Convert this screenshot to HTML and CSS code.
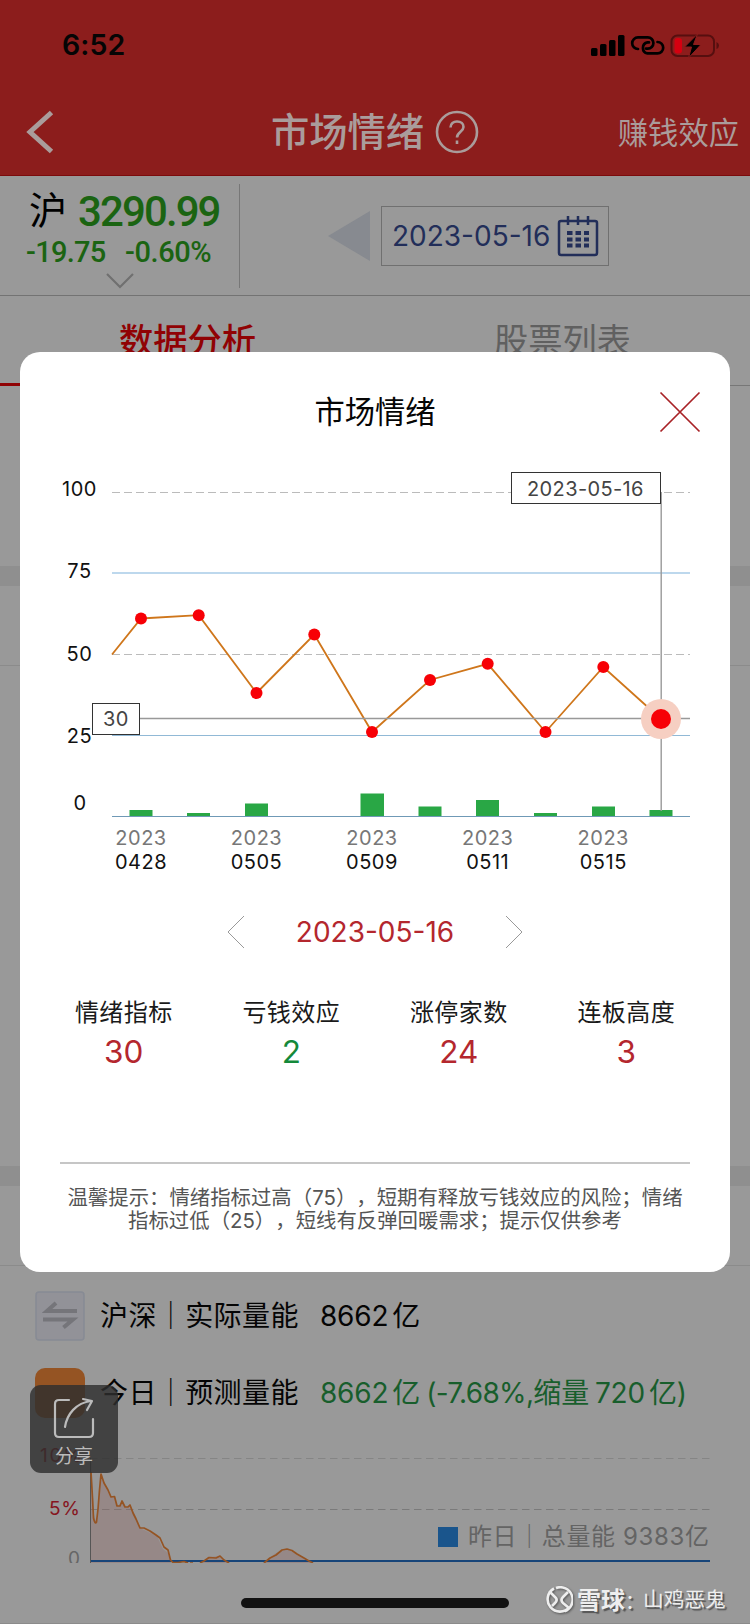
FILE: index.html
```html
<!DOCTYPE html>
<html lang="zh-CN">
<head>
<meta charset="utf-8">
<title>市场情绪</title>
<link rel="stylesheet" href="styles.css">
</head>
<body>
<div class="screen">
  <header class="header">
    <div class="status">
      <span class="time">6:52</span>
      <svg class="status-icons" width="132" height="26" viewBox="0 0 132 26">
        <rect x="1" y="15" width="6.500" height="8" rx="1.500"/>
        <rect x="10" y="11" width="6.500" height="12" rx="1.500"/>
        <rect x="19" y="7" width="6.500" height="16" rx="1.500"/>
        <rect x="28" y="2" width="6.500" height="21" rx="1.500"/>
        <path class="link" d="M48 16A5.800 5.800 0 0 1 48 4.400H57.800A5.600 5.600 0 0 1 57.800 15.600H56"/>
        <path class="link" d="M67.500 9A5.700 5.700 0 0 1 67.500 20.400H57.500A5.600 5.600 0 0 1 57.500 9.400H59"/>
        <rect class="battery" x="81.500" y="2.500" width="42.500" height="20.500" rx="6"/>
        <path class="cap" d="M126.500 9Q129 10 129 12.500Q129 15 126.500 16Z"/>
        <rect class="charge" x="84.500" y="5" width="7.500" height="15.500" rx="3"/>
        <path class="bolt" d="M107.500 1L94.500 14H101.500L98.500 25L111 11.500H103.500Z"/>
      </svg>
    </div>
    <div class="navbar">
      <svg class="back" width="30" height="44" viewBox="0 0 30 44"><path d="M26.500 2.500L5 22L26.500 41.500"/></svg>
      <div class="nav-title"><span>市场情绪</span>
        <svg width="44" height="44" viewBox="0 0 44 44"><circle cx="22" cy="22" r="20"/><path d="M15.500 17.500C15.500 13.500 18.500 11.500 22 11.500C26 11.500 28.500 13.800 28.500 17C28.500 21.500 22 22 22 27.500"/><path d="M22 30.500V34"/></svg>
      </div>
      <span class="nav-link">赚钱效应</span>
    </div>
  </header>

  <section class="quote">
    <div class="index">
      <div class="index-main"><span class="index-name">沪</span><span class="price">3290.99</span></div>
      <div class="index-sub"><span class="diff">-19.75</span><span class="pct">-0.60%</span></div>
      <svg class="down" width="30" height="18" viewBox="0 0 30 18"><path d="M2 2L15 15L28 2"/></svg>
    </div>
    <div class="picker">
      <svg width="42" height="50" viewBox="0 0 42 50"><path d="M0 25L42 0V50Z"/></svg>
      <div class="date-box"><span>2023-05-16</span>
        <svg width="42" height="42" viewBox="0 0 42 42">
          <rect x="2" y="6" width="38" height="34" rx="2"/>
          <path d="M11 1V10M21 1V10M31 1V10"/>
          <path class="cells" d="M10 18H32M10 24.500H32M10 30.500H32"/>
        </svg>
      </div>
    </div>
  </section>

  <nav class="tabs"><span class="tab active">数据分析</span><span class="tab">股票列表</span></nav>
  <div class="panel first"></div>
  <div class="band"></div>
  <div class="panel-head"></div>
  <div class="panel second"></div>
  <div class="band"></div>
  <div class="panel-head"></div>

  <section class="volume">
    <div class="vol-row">
      <svg class="swap" width="50" height="50" viewBox="0 0 50 50"><rect x="1" y="1" width="48" height="48" rx="3"/><path d="M42 20H12L21 12M8 28.500H38L28.500 36.500"/></svg>
      <span class="vol-label">沪深｜实际量能</span><span class="vol-value">8662<i>亿</i></span>
    </div>
    <div class="vol-row">
      <span class="today"></span>
      <span class="vol-label">今日｜预测量能</span><span class="vol-value green">8662<i>亿</i><span class="change">(-7.68%,</span>缩量<span class="amount">720</span><i>亿</i>)</span>
    </div>
    <svg class="vol-chart" width="750" height="138" viewBox="0 1425 750 138">
      <path class="dash pale" d="M90 1458.500H710"/>
      <path class="dash" d="M90 1509.500H710"/>
      <path class="area" d="M91 1458L92 1480L94 1515L96.500 1523L101.500 1473L105 1486L111 1497L115 1497L118 1506L122 1501L126 1507L130 1504L138 1521L140 1528L157 1536L163 1549L168 1553L171 1563H91Z"/>
      <path class="area" d="M203 1563L208 1557L219 1556L230 1563ZM263 1563L276 1553L287 1549L297 1554L313 1563Z"/>
      <path class="axis" d="M90.500 1458V1563"/>
      <path class="base" d="M91 1561H710"/>
      <path class="trend" d="M91 1472L92.500 1498L93.500 1518Q95 1525 96.500 1522L98 1509L99.500 1490L101 1474L104 1483L108 1490L111 1497L114.500 1496.500L117 1506L120 1506L122 1501L125 1507L128 1507L130 1505L133 1513L136 1519L140 1528H144L150 1531L156 1535L160 1538L164 1547L168 1550L170.500 1560L173 1562.500H178L184 1561.500L188 1563M190 1563H193M200 1563L204 1561L209 1557.500L216 1558L220 1556L224 1560L229 1563M264 1563L270 1558L276 1555L282 1550L287 1549L292 1550.500L297 1554L304 1558L309 1561L313 1563"/>
      <text class="tick" x="40" y="1462" textLength="42">10%</text>
      <text class="tick" x="49" y="1515" textLength="31">5%</text>
      <text class="tick zero" x="68" y="1565">0</text>
      <rect class="key" x="438" y="1527" width="20" height="20"/>
      <text class="key-text" x="468" y="1545" textLength="241">昨日｜总量能 9383亿</text>
    </svg>
  </section>
  <footer class="footer"><div class="home-bar"></div></footer>

  <div class="share">
    <svg width="44" height="44" viewBox="0 0 44 44"><path d="M17 3H7Q3 3 3 7V36Q3 40 7 40H37Q41 40 41 36V22M13 30C15 17 24 6 39 4M31 2L40 4L35 13"/></svg>
    <span>分享</span>
  </div>

  <div class="watermark">
    <svg width="28" height="28" viewBox="0 0 28 28"><path d="M9 2.500A12.300 12.300 0 1 0 24.500 21M19.500 25.300A12.300 12.300 0 0 0 11 2M4 5L10.500 11.500Q13 14 10 17L7 20M23 6L18 11Q15 14 18 17L24 22"/></svg>
    <b>雪球</b><em>：</em><span>山鸡恶鬼</span>
  </div>

  <main class="modal">
    <h1>市场情绪</h1>
    <svg class="close" width="42" height="42" viewBox="0 0 42 42"><path d="M1.500 1.500L40.500 40.500M40.500 1.500L1.500 40.500"/></svg>
    <svg class="chart" width="710" height="418" viewBox="20 462 710 418">
      <path class="dash" d="M112 492.500H690M112 654.500H690"/>
      <path class="blue pale" d="M112 573H690"/>
      <path class="blue" d="M112 735.500H690"/>
      <g class="bars">
        <rect x="129.500" y="810" width="23" height="6.500"/><rect x="187" y="813" width="23" height="3.500"/><rect x="245" y="803.500" width="23" height="13"/><rect x="360.500" y="793.500" width="23.500" height="23"/><rect x="418.500" y="806.500" width="23" height="10"/><rect x="476" y="800" width="23" height="16.500"/><rect x="534" y="813" width="23" height="3.500"/><rect x="592" y="806.500" width="23" height="10"/><rect x="649.500" y="810" width="23" height="6.500"/>
      </g>
      <path class="blue dark" d="M112 816.500H690"/>
      <path class="line" d="M112 654.500L141 618.500L198.700 615.200L256.500 693L314.300 634.500L372 732L430 680L487.700 663.800L545.500 732L603.300 667L661 719"/>
      <path class="cross" d="M140 718.500H690M661.200 492V811"/>
      <g class="dots"><circle cx="141" cy="618.500" r="6"/><circle cx="198.700" cy="615.200" r="6"/><circle cx="256.500" cy="693" r="6"/><circle cx="314.300" cy="634.500" r="6"/><circle cx="372" cy="732" r="6"/><circle cx="430" cy="680" r="6"/><circle cx="487.700" cy="663.800" r="6"/><circle cx="545.500" cy="732" r="6"/><circle cx="603.300" cy="667" r="6"/></g>
      <circle class="halo" cx="661" cy="719" r="20"/><circle class="dot" cx="661" cy="719" r="10"/>
      <g class="labels">
        <text x="79.500" y="495.500">100</text><text x="79.500" y="578">75</text><text x="79.500" y="660.500">50</text><text x="79.500" y="743">25</text><text x="80" y="809.500">0</text>
        <text x="141" y="868.500">0428</text><text x="256.500" y="868.500">0505</text><text x="372" y="868.500">0509</text><text x="487.700" y="868.500">0511</text><text x="603.300" y="868.500">0515</text>
      </g>
      <g class="labels years"><text x="141" y="844.500">2023</text><text x="256.500" y="844.500">2023</text><text x="372" y="844.500">2023</text><text x="487.700" y="844.500">2023</text><text x="603.300" y="844.500">2023</text></g>
      <rect class="tag" x="92.500" y="703.500" width="47" height="31"/>
      <rect class="tag" x="511.500" y="472.500" width="149" height="31"/>
      <g class="labels tags"><text x="116" y="726">30</text><text x="585.500" y="495.500" textLength="117">2023-05-16</text></g>
    </svg>
    <div class="pager">
      <svg width="18" height="34" viewBox="0 0 18 34"><path d="M17 1L1 17L17 33"/></svg>
      <span>2023-05-16</span>
      <svg width="18" height="34" viewBox="0 0 18 34"><path d="M1 1L17 17L1 33"/></svg>
    </div>
    <div class="stats">
      <div><span>情绪指标</span><strong>30</strong></div>
      <div><span>亏钱效应</span><strong class="green">2</strong></div>
      <div><span>涨停家数</span><strong>24</strong></div>
      <div><span>连板高度</span><strong>3</strong></div>
    </div>
    <p class="note">温馨提示：情绪指标过高（75），短期有释放亏钱效应的风险；情绪<br>指标过低（25），短线有反弹回暖需求；提示仅供参考</p>
  </main>
</div>
</body>
</html>
```

FILE: styles.css
```css
* { box-sizing: border-box; }
body { margin: 0; font-family: Inter, "Noto Sans CJK SC", sans-serif; background: #999; }
svg { display: block; fill: none; flex: none; }
i, em { font-style: normal; }
.screen { position: relative; width: 750px; height: 1624px; overflow: hidden; display: flex; flex-direction: column; background: #999; color: #050505; }

.header { height: 176px; flex: none; background: #8c1d1c; border-bottom: 1px solid #7c0b0c; display: flex; flex-direction: column; }
.status { height: 88px; display: flex; justify-content: space-between; align-items: center; padding: 4px 28px 0 62px; }
.time { font-size: 28.5px; font-weight: 600; letter-spacing: .1px; line-height: 36px; margin-top: -1px; }
.status-icons { fill: #000; }
.status-icons .link { fill: none; stroke: #000; stroke-width: 2.7; stroke-linecap: round; }
.status-icons .battery { fill: none; stroke: #560f0f; stroke-width: 2; }
.status-icons .cap { fill: #560f0f; }
.status-icons .charge { fill: #d40010; }
.status-icons .bolt { stroke: #8c1d1c; stroke-width: 1; }
.navbar { height: 88px; display: grid; grid-template-columns: 200px 1fr 200px; align-items: center; color: #aa9c9b; padding: 1px 11px 0 25px; }
.back { stroke: #aa9c9b; stroke-width: 5; }
.nav-title { display: flex; justify-content: center; align-items: center; gap: 11px; margin-right: 14px; font-size: 38.3px; line-height: 50px; font-weight: 500; white-space: nowrap; }
.nav-title svg { stroke: #aa9c9b; stroke-width: 2.6; }
.nav-link { font-size: 30.3px; text-align: right; margin-top: -2px; }

.quote { height: 120px; flex: none; display: flex; border-bottom: 1px solid #737373; }
.index { width: 240px; height: 104px; margin-top: 8px; border-right: 1px solid #777; display: flex; flex-direction: column; align-items: flex-start; color: #1b6412; font-family: Roboto, "Noto Sans CJK SC", sans-serif; font-weight: 500; }
.index-main { display: flex; align-items: center; height: 54px; padding-left: 29px; line-height: 54px; }
.index-name { font-size: 38px; width: 49px; color: #000; font-weight: 400; }
.price { font-size: 42px; letter-spacing: -1.9px; padding-top: 1px; }
.index-sub { display: flex; height: 28px; line-height: 29px; font-size: 29px; padding-left: 26px; }
.diff { width: 99px; letter-spacing: -.7px; }
.pct { letter-spacing: -.4px; }
.down { margin: 6px 0 0 105px; stroke: #707070; stroke-width: 2.2; }
.picker { display: flex; align-items: center; padding-left: 88px; gap: 11px; height: 120px; }
.picker > svg { fill: #878a90; }
.date-box { width: 228px; height: 60px; border: 1px solid #707070; display: flex; align-items: center; justify-content: space-between; padding: 0 9px 0 10px; font-size: 28px; color: #222e59; letter-spacing: 0; white-space: nowrap; }
.date-box svg { stroke: #222e59; stroke-width: 2.5; }
.date-box .cells { stroke-width: 4; stroke-dasharray: 5.500 3; }

.tabs { height: 90px; flex: none; display: grid; grid-template-columns: 1fr 1fr; }
.tab { border-bottom: 1px solid #777; text-align: center; font-size: 34.3px; line-height: 90px; height: 90px; color: #606060; font-weight: 400; }
.tab.active { color: #900204; border-bottom: 3px solid #900204; font-weight: 500; }
.panel { flex: none; }
.panel.first { height: 180px; }
.panel.second { height: 500px; }
.band { height: 20px; flex: none; background: #8f8f8f; }
.panel-head { height: 80px; flex: none; border-bottom: 1px solid #8b8b8b; }

.volume { height: 297px; flex: none; padding-top: 13px; position: relative; }
.vol-row { height: 73px; display: flex; align-items: center; padding-left: 35px; font-size: 28px; line-height: 40px; white-space: nowrap; }
.vol-row + .vol-row { margin-top: 4px; }
.swap rect { fill: #929298; stroke: #878b94; stroke-width: 1.5; }
.swap path { stroke: #75757a; stroke-width: 4; }
.today { width: 50px; height: 50px; border-radius: 10px; background: #955423; flex: none; }
.vol-label { width: 220px; margin: 1px 0 0 15px; letter-spacing: .4px; }
.vol-value { letter-spacing: -.2px; margin-top: 1px; }
.vol-value i { margin-left: 4px; }
.change { margin-left: 6px; letter-spacing: -.65px; }
.amount { margin-left: 6px; }
.vol-value.green { color: #185e2c; }
.vol-chart { margin-top: -4px; }
.vol-chart .dash { stroke: #7a7a7a; stroke-dasharray: 7.500 4.500; }
.vol-chart .dash.pale { stroke: #858585; }
.vol-chart .area { fill: rgba(145, 100, 96, .3); }
.vol-chart .axis { stroke: #555; }
.vol-chart .base { stroke: #174579; stroke-width: 2; }
.vol-chart .trend { stroke: #955423; stroke-width: 1.7; stroke-linejoin: round; }
.tick { fill: #861520; font-size: 19px; }
.tick.zero { fill: #666; }
.key { fill: #1a558c; }
.key-text { fill: #646464; font-size: 24px; }
.footer { flex: 1; display: flex; justify-content: center; padding-top: 35px; border-bottom: 1px solid #8b8b8b; }
.home-bar { width: 268px; height: 10px; border-radius: 5px; background: #121212; }

.share { position: absolute; left: 30px; top: 1385px; width: 88px; height: 88px; border-radius: 11px; background: rgba(46, 46, 46, .82); display: flex; flex-direction: column; align-items: center; padding-top: 12px; color: #bbb; }
.share svg { stroke: #bbb; stroke-width: 2.2; stroke-linecap: round; stroke-linejoin: round; }
.share span { font-size: 19px; line-height: 26px; margin-top: 3px; }
.watermark { position: absolute; left: 545px; top: 1582px; height: 36px; display: flex; align-items: center; color: #eee; text-shadow: 2px 2px 1px #555; white-space: nowrap; }
.watermark svg { stroke: #eee; stroke-width: 2.6; filter: drop-shadow(1px 1px 1px #555); }
.watermark b { font-size: 24px; margin: -3px 0 0 4px; }
.watermark em { width: 18px; font-size: 20px; }
.watermark span { font-size: 20.7px; margin-top: -4px; }

.modal { position: absolute; left: 20px; top: 352px; width: 710px; height: 920px; border-radius: 20px; background: #fff; display: flex; flex-direction: column; }
.modal h1 { margin: 0; height: 110px; font-size: 30.3px; font-weight: 400; line-height: 121px; text-align: center; }
.close { position: absolute; right: 29px; top: 39px; stroke: #a82226; stroke-width: 1.7; }
.chart .dash { stroke: #bbb; stroke-width: 1.200; stroke-dasharray: 8 4; }
.blue { stroke: #91b9d6; }
.blue.pale { stroke: #bdd8ed; stroke-width: 2; }
.blue.dark { stroke: #6f99b6; }
.bars { fill: #29a745; }
.line { stroke: #cf761b; stroke-width: 1.8; }
.cross { stroke: #999; stroke-width: 1.4; }
.dots, .dot { fill: #f70006; }
.halo { fill: #f6cfc2; }
.labels { font-size: 20px; text-anchor: middle; fill: #111; letter-spacing: .5px; }
.labels.years { fill: #777; }
.labels.tags { fill: #444; }
.tag { fill: #fff; stroke: #333; }
.pager { height: 104px; display: flex; justify-content: center; align-items: center; gap: 51px; color: #b4272e; font-size: 28px; }
.pager svg { stroke: #999; stroke-width: 1; }
.stats { height: 176px; margin: 0 20px; display: grid; grid-template-columns: repeat(4, 1fr); padding-top: 12px; }
.stats div { display: flex; flex-direction: column; align-items: center; }
.stats span { font-size: 24px; letter-spacing: .4px; line-height: 34px; color: #1a1a1a; }
.stats strong { font-size: 31.5px; line-height: 42px; font-weight: 400; color: #b4272e; margin-top: 1px; }
.stats .green { color: #14893a; }
.note { margin: 2px 40px 0; border-top: 2px solid #c6c6c6; padding-top: 22px; font-size: 20.4px; line-height: 23px; color: #555; text-align: center; white-space: nowrap; text-spacing-trim: space-all; }
```
